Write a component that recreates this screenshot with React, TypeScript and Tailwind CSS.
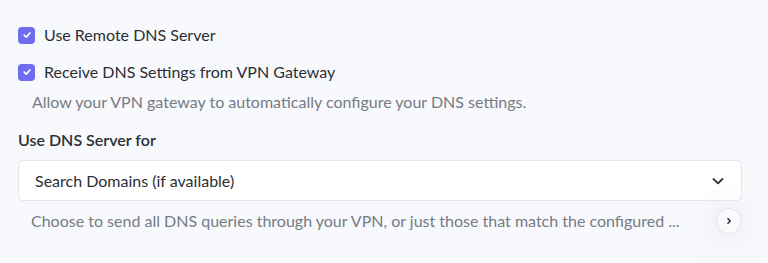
import React from "react";

function Check() {
  return (
    <span className="flex h-[17px] w-[17px] shrink-0 items-center justify-center rounded-[4px] bg-[#6f6cf0]">
      <svg width="10" height="10" viewBox="0 0 10 10" fill="none">
        <path d="M2.2 5.2 L4.2 7.1 L7.9 3" stroke="white" strokeWidth="1.7" strokeLinecap="round" strokeLinejoin="round" />
      </svg>
    </span>
  );
}

export default function App() {
  return (
    <div
      className="h-[263px] w-[768px] bg-[#f8f9fc] px-[18px] pt-[26px] text-[#2b2f36]"
      style={{ fontFamily: "Lato, 'Noto Sans', sans-serif" }}
    >
      <div className="flex h-[18px] items-center gap-[9px]">
        <Check />
        <span className="text-[16px]">Use Remote DNS Server</span>
      </div>
      <div className="mt-[19px] flex h-[18px] items-center gap-[9px]">
        <Check />
        <span className="text-[16px]">Receive DNS Settings from VPN Gateway</span>
      </div>
      <div className="mt-[12px] pl-[14px] text-[16px] leading-[18px] text-[#767b84]">
        Allow your VPN gateway to automatically configure your DNS settings.
      </div>
      <div className="mt-[20px] text-[16px] font-semibold leading-[18px] text-[#2b2f36]">
        Use DNS Server for
      </div>
      <div className="mt-[11px] flex h-[41px] w-[724px] items-center justify-between rounded-[5px] border border-[#e3e5ea] bg-white pl-[16px] pr-[16px]">
        <span className="text-[16px]">Search Domains (if available)</span>
        <svg width="14" height="14" viewBox="0 0 14 14" fill="none">
          <path d="M2.5 5 L7 9.3 L11.5 5" stroke="#2b2f36" strokeWidth="1.8" strokeLinecap="round" strokeLinejoin="round" />
        </svg>
      </div>
      <div className="mt-[7px] flex w-[724px] items-center justify-between pl-[13px]">
        <span className="text-[16px] leading-[18px] text-[#767b84]">
          Choose to send all DNS queries through your VPN, or just those that match the configured ...
        </span>
        <span className="flex h-[26px] w-[26px] items-center justify-center rounded-full border border-[#e3e5ea] bg-[#f9fafc] shadow-[0_0_24px_8px_rgba(220,224,235,0.35)]">
          <svg width="10" height="10" viewBox="0 0 10 10" fill="none">
            <path d="M4 2.8 L6.2 5 L4 7.2" stroke="#2b2f36" strokeWidth="1.6" strokeLinecap="round" strokeLinejoin="round" />
          </svg>
        </span>
      </div>
    </div>
  );
}
